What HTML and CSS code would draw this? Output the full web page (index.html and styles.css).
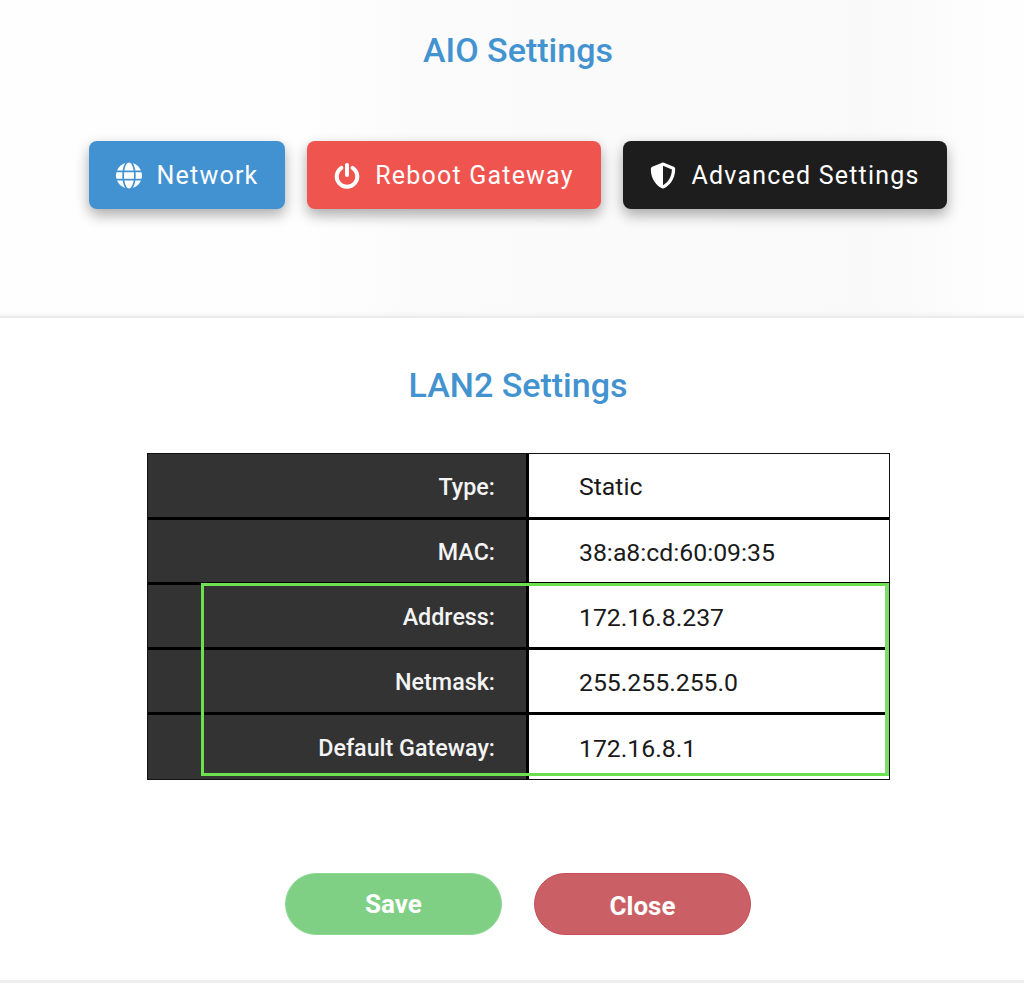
FILE: index.html
```html
<!DOCTYPE html>
<html lang="en">
<head>
    <meta charset="UTF-8">
    <title>AIO Settings</title>
    <link rel="stylesheet" href="styles.css">
</head>
<body>
    <div class="panel-top">
        <h1 class="title">AIO Settings</h1>
        <div class="actions">
            <button class="action action-blue">
                <svg class="action-icon" viewBox="0 0 496 512"><path fill="currentColor" d="M336.5 160C322 70.7 287.8 8 248 8s-74 62.7-88.5 152h177zM152 256c0 22.2 1.2 43.5 3.3 64h185.3c2.1-20.5 3.3-41.8 3.3-64s-1.2-43.5-3.3-64H155.3c-2.1 20.5-3.3 41.8-3.3 64zm324.7-96c-28.6-67.9-86.5-120.4-158-141.6 24.4 33.8 41.2 84.7 50 141.6h108zM177.2 18.4C105.8 39.6 47.8 92.1 19.3 160h108c8.7-56.9 25.5-107.8 49.9-141.6zM487.4 192H372.7c2.1 21 3.3 42.5 3.3 64s-1.2 43-3.3 64h114.6c5.5-20.5 8.6-41.8 8.6-64s-3.1-43.5-8.5-64zM120 256c0-21.5 1.2-43 3.3-64H8.6C3.2 212.5 0 233.8 0 256s3.2 43.5 8.6 64h114.6c-2-21-3.2-42.5-3.2-64zm39.5 96c14.5 89.3 48.7 152 88.5 152s74-62.7 88.5-152h-177zm159.3 141.6c71.4-21.2 129.4-73.7 158-141.6h-108c-8.8 56.9-25.6 107.8-50 141.6zM19.3 352c28.6 67.9 86.5 120.4 158 141.6-24.4-33.8-41.2-84.7-50-141.6h-108z"/></svg>
                Network
            </button>
            <button class="action action-red">
                <svg class="action-icon" viewBox="0 0 26 26"><path fill="none" stroke="currentColor" stroke-width="4" stroke-linecap="round" d="M13 2.5v10M7.4 5.4a10.3 10.3 0 1 0 11.2 0"/></svg>
                Reboot Gateway
            </button>
            <button class="action action-black">
                <svg class="action-icon" viewBox="0 0 512 512"><path fill="currentColor" d="M466.5 83.7l-192-80a48.15 48.15 0 0 0-36.9 0l-192 80C27.7 91.1 16 108.6 16 128c0 198.5 114.5 335.7 221.5 380.3 11.8 4.9 25.1 4.9 36.9 0C360.1 472.6 496 349.3 496 128c0-19.4-11.7-36.9-29.5-44.3zM256.1 446.3l-.1-381 175.9 73.3c-3.3 151.4-82.1 261.1-175.8 307.7z"/></svg>
                Advanced Settings
            </button>
        </div>
    </div>

    <div class="panel-lan">
        <h2 class="title">LAN2 Settings</h2>
        <div class="table-wrap">
            <table class="lan-table">
                <tr><th>Type:</th><td>Static</td></tr>
                <tr><th>MAC:</th><td>38:a8:cd:60:09:35</td></tr>
                <tr><th>Address:</th><td>172.16.8.237</td></tr>
                <tr><th>Netmask:</th><td>255.255.255.0</td></tr>
                <tr><th>Default Gateway:</th><td>172.16.8.1</td></tr>
            </table>
            <div class="highlight"></div>
        </div>
        <div class="form-buttons">
            <button class="pill pill-save">Save</button>
            <button class="pill pill-close">Close</button>
        </div>
    </div>
</body>
</html>
```

FILE: styles.css
```css
* {
    margin: 0;
    padding: 0;
    box-sizing: border-box;
}

body {
    font-family: Roboto, "Liberation Sans", sans-serif;
    background: #fff;
    height: 985px;
    overflow: hidden;
}

.title {
    padding-left: 12px;
    color: #4393d0;
    font-size: 34px;
    font-weight: 500;
    line-height: 40px;
    text-align: center;
}

.panel-top {
    height: 318px;
    padding-top: 30px;
    background: linear-gradient(90deg, #fefefe 30%, #fbfbfb 40%, #f9f9f9 85%, #fcfcfc 93%, #fefefe 97%);
    border-bottom: 2px solid #ebebeb;
    box-shadow: inset 0 -5px 5px -4px rgba(0,0,0,0.05);
}

.actions {
    display: flex;
    justify-content: center;
    gap: 22px;
    margin-top: 71px;
    padding-left: 12px;
}

.action {
    display: flex;
    align-items: center;
    justify-content: center;
    gap: 15px;
    height: 68px;
    border: none;
    border-radius: 8px;
    color: #fff;
    font-family: inherit;
    font-size: 25px;
    letter-spacing: 1.2px;
    box-shadow: 0 6px 14px rgba(0,0,0,0.33);
}

.action-icon {
    width: 26px;
    height: 27px;
}

.action-blue {
    width: 196px;
    background: #4292d1;
}

.action-red {
    width: 294px;
    background: #f0544f;
}

.action-black {
    width: 324px;
    background: #1d1d1d;
}

.panel-lan {
    height: 665px;
    padding-top: 47px;
    border-bottom: 3px solid #eee;
}

.table-wrap {
    position: relative;
    width: 743px;
    margin: 48px 0 0 147px;
}

.lan-table {
    width: 100%;
    border-collapse: separate;
    border-spacing: 0;
    table-layout: fixed;
    border: 1px solid #111;
    font-size: 24.8px;
}

.lan-table tr {
    height: 65px;
}

.lan-table tr:first-child {
    height: 66px;
}

.lan-table tr:last-child {
    height: 64px;
}

.lan-table th {
    width: 381px;
    padding: 2px 31px 0 0;
    background: #333;
    color: #f4f4f4;
    font-size: 23.3px;
    font-weight: 500;
    text-align: right;
    border-right: 3px solid #000;
    border-bottom: 3px solid #000;
}

.lan-table td {
    padding: 2px 0 0 50px;
    color: #1a1a1a;
    border-bottom: 3px solid #000;
}

.lan-table tr:last-child th,
.lan-table tr:last-child td {
    border-bottom: none;
}

.highlight {
    position: absolute;
    left: 54px;
    top: 130px;
    width: 688px;
    height: 193px;
    border: 3px solid #6ce04f;
    border-right-color: #7edc6e;
    border-right-width: 4px;
}

.form-buttons {
    display: flex;
    justify-content: center;
    gap: 32px;
    margin-top: 93px;
    padding-left: 12px;
}

.pill {
    width: 217px;
    height: 62px;
    border-radius: 31px;
    color: #fff;
    font-family: inherit;
    font-size: 26px;
    font-weight: 700;
}

.pill-save {
    background: #7fd085;
    border: 1px solid #8fd995;
    padding-bottom: 1px;
}

.pill-close {
    background: #cb5f66;
    border: 1px solid #c64d58;
    padding-top: 3px;
}
```
